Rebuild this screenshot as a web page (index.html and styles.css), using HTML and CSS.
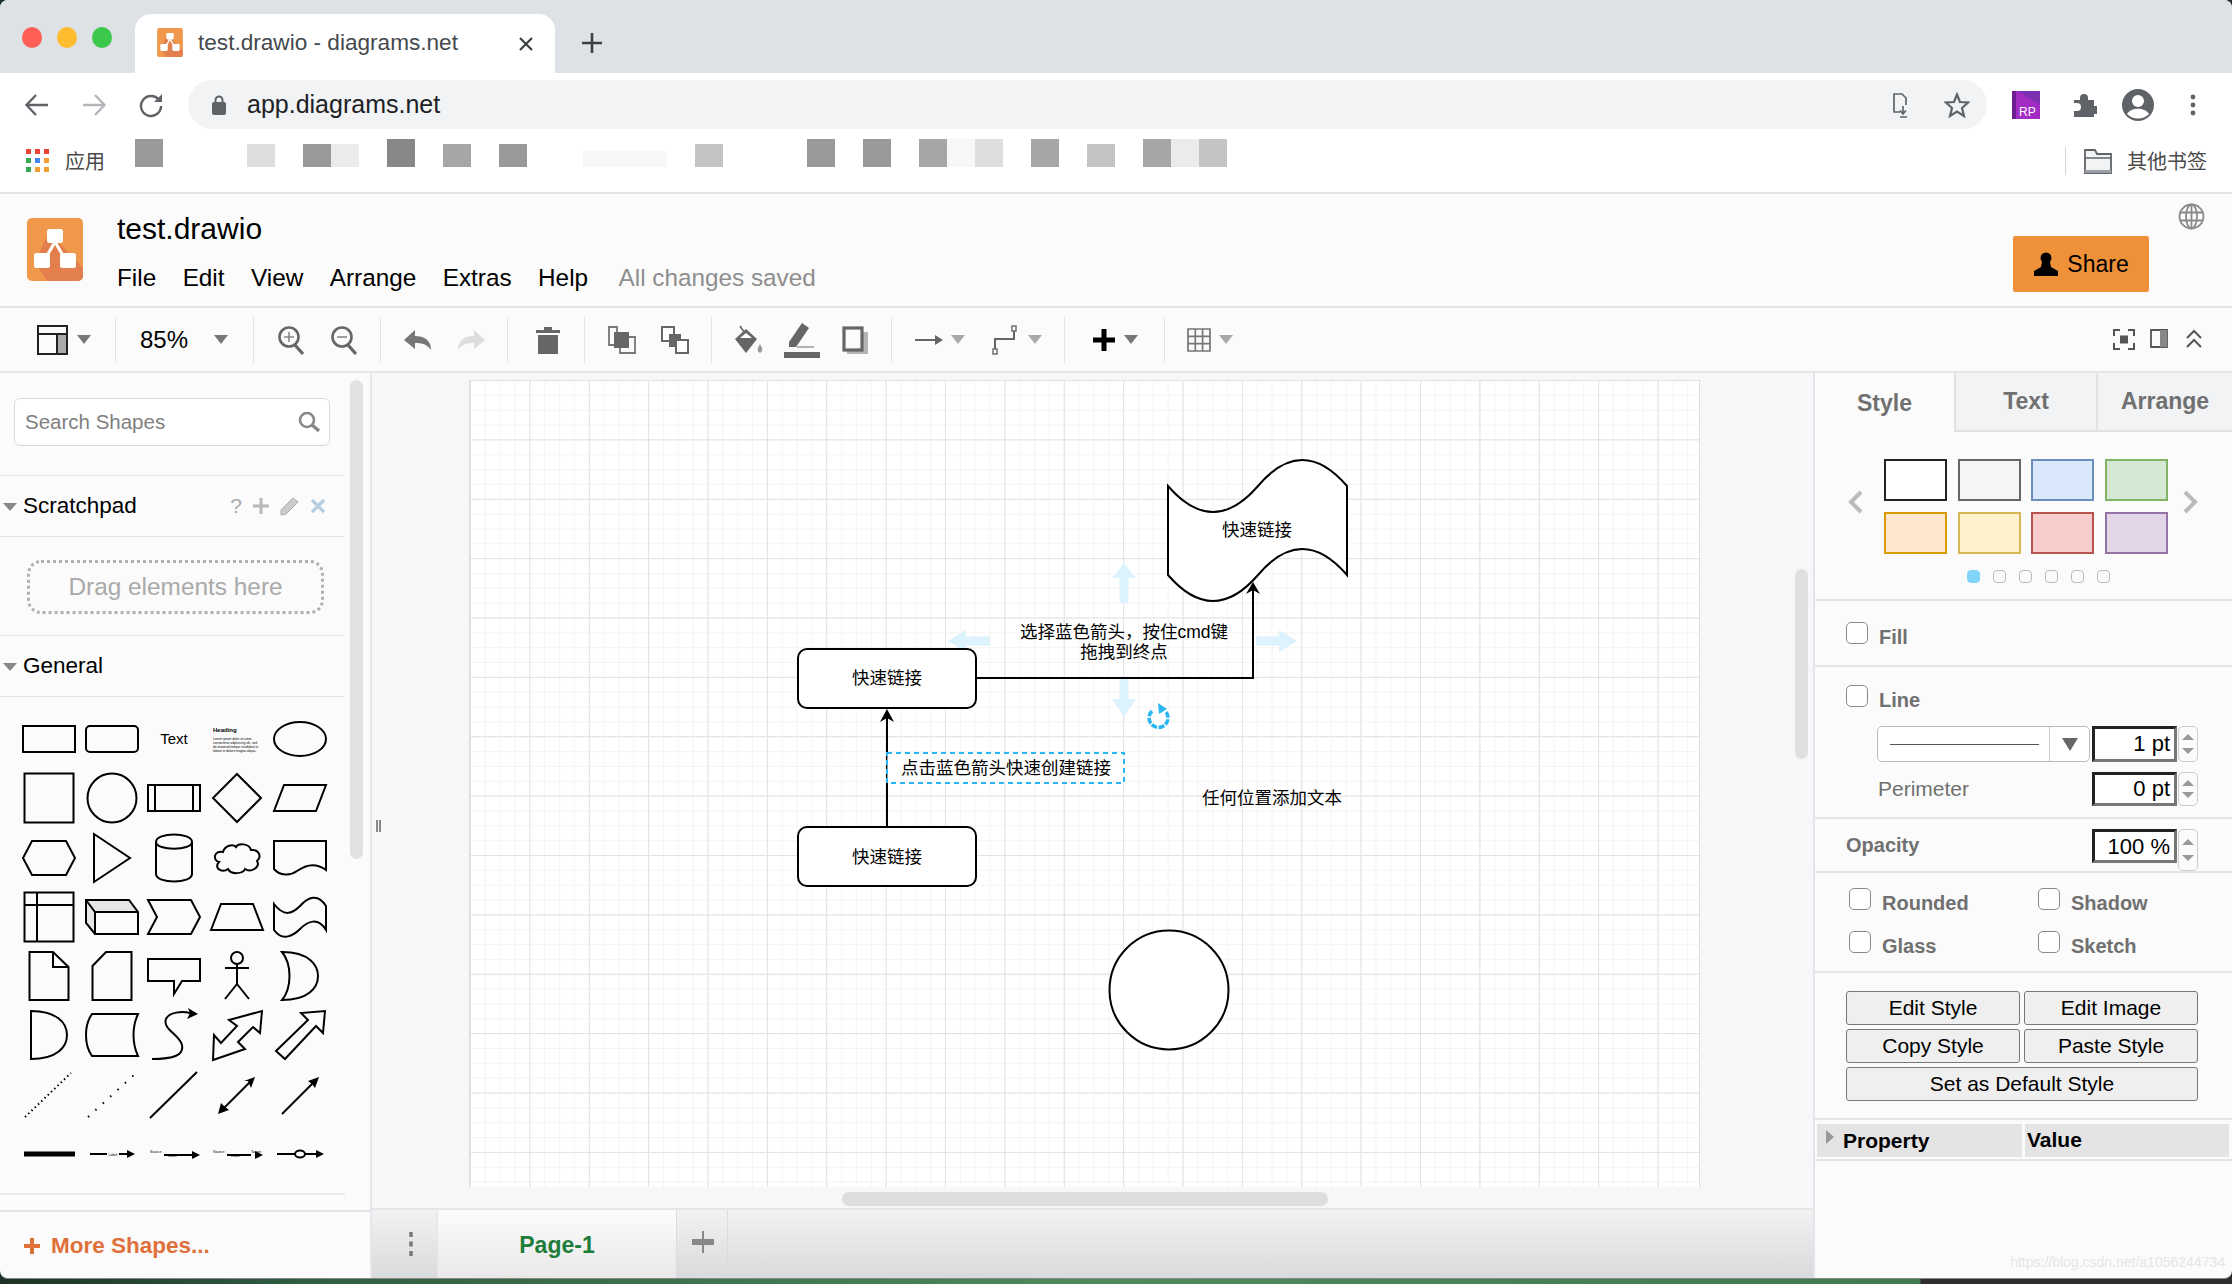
FILE: index.html
```html
<!DOCTYPE html>
<html lang="en">
<head>
  <meta charset="UTF-8" />
  <meta name="viewport" content="width=device-width, initial-scale=1.0" />
  <title>test.drawio - diagrams.net</title>
  <link rel="stylesheet" href="styles.css">
</head>
<body>

<svg class="defs" width="0" height="0">
  <symbol id="dio" viewBox="0 0 56 63">
    <rect width="56" height="63" rx="5" fill="#f0994c"/>
    <path d="M22 14 L56 50 V58 a5 5 0 0 1 -5 5 H20 L8 44 Z" fill="#e27f4c"/>
    <path d="M28 24 L15 46 M28 24 L41 46" stroke="#fff" stroke-width="3" fill="none"/>
    <rect x="20" y="11" width="16" height="14" rx="2.5" fill="#fff"/>
    <rect x="7" y="35" width="16" height="15" rx="2.5" fill="#fff"/>
    <rect x="33" y="35" width="16" height="15" rx="2.5" fill="#fff"/>
  </symbol>
</svg>

<div class="window">

  <div class="tabstrip">
    <div class="lights">
      <span class="light red"></span><span class="light yellow"></span><span class="light green"></span>
    </div>
    <div class="tab">
      <svg class="favicon" width="28" height="29"><use href="#dio"/></svg>
      <span class="tab-title">test.drawio - diagrams.net</span>
      <svg class="tab-close" width="16" height="16" viewBox="0 0 16 16"><path d="M2 2 L14 14 M14 2 L2 14" stroke="#3c4043" stroke-width="2.2"/></svg>
    </div>
    <svg class="new-tab" width="22" height="22" viewBox="0 0 22 22"><path d="M11 1 V21 M1 11 H21" stroke="#3c4043" stroke-width="2.6"/></svg>
  </div>

  <div class="urlbar">
    <svg class="nav-icon" width="26" height="24" viewBox="0 0 26 24"><path d="M24 12 H3 M12 2 L2.500 12 L12 22" fill="none" stroke="#5f6368" stroke-width="2.400"/></svg>
    <svg class="nav-icon" width="26" height="24" viewBox="0 0 26 24"><path d="M2 12 H23 M14 2 L23.500 12 L14 22" fill="none" stroke="#b4b6b9" stroke-width="2.400"/></svg>
    <svg class="nav-icon" width="26" height="26" viewBox="0 0 26 26"><path d="M21 8 A10 10 0 1 0 23 14" fill="none" stroke="#5f6368" stroke-width="2.400"/><path d="M24 2 V10 H16 Z" fill="#5f6368"/></svg>
    <div class="address">
      <svg width="14" height="20" viewBox="0 0 14 20"><path d="M3.500 8 V5 a3.500 3.500 0 0 1 7 0 V8" fill="none" stroke="#5f6368" stroke-width="2"/><rect y="7" width="14" height="13" rx="2" fill="#5f6368"/></svg>
      <span class="url">app.diagrams.net</span>
      <svg class="addr-a" width="18" height="26" viewBox="0 0 18 26"><path d="M9 20 H3 V2 H11 L15 6 V13 M12 14 V21 M9 18.500 L12 22 L15 18.500 M9 25 H16" fill="none" stroke="#5f6368" stroke-width="1.700"/></svg>
      <svg class="addr-b" width="26" height="26" viewBox="0 0 26 26"><path d="M13 2.500 L16 10 L24 10.500 L18 16 L20 24 L13 19.500 L6 24 L8 16 L2 10.500 L10 10 Z" fill="none" stroke="#5f6368" stroke-width="2.200"/></svg>
    </div>
    <svg class="ext-rp" width="28" height="28" viewBox="0 0 28 28"><rect width="28" height="28" fill="#a22bc4"/><rect width="4" height="28" fill="#6d1c92"/><path d="M6 0 H28 V14 Z" fill="#7c2fae"/><text x="7" y="25" class="rp-text">RP</text></svg>
    <svg class="ext-puzzle" width="26" height="26" viewBox="0 0 26 26"><path d="M3 8 H9 V6 a4 4 0 0 1 8 0 V8 H23 V14 H25 a4 4 0 0 1 0 8 H23 V25 H3 V19 H6 a4 4 0 0 0 0 -8 H3 Z" fill="#5f6368"/></svg>
    <svg class="ext-avatar" width="32" height="32" viewBox="0 0 32 32"><circle cx="16" cy="16" r="16" fill="#5f6368"/><circle cx="16" cy="12" r="6" fill="#fff"/><path d="M5 25 C9 18 23 18 27 25 C21 31 11 31 5 25 Z" fill="#fff"/></svg>
    <svg class="ext-menu" width="6" height="24" viewBox="0 0 6 24"><circle cx="3" cy="4" r="2.400" fill="#5f6368"/><circle cx="3" cy="12" r="2.400" fill="#5f6368"/><circle cx="3" cy="20" r="2.400" fill="#5f6368"/></svg>
  </div>

  <div class="bookmarks">
    <svg class="apps" width="23" height="23" viewBox="0 0 23 23">
      <rect width="5" height="5" fill="#ea4335"/><rect x="9" width="5" height="5" fill="#ea4335"/><rect x="18" width="5" height="5" fill="#ea4335"/>
      <rect y="9" width="5" height="5" fill="#34a853"/><rect x="9" y="9" width="5" height="5" fill="#4285f4"/><rect x="18" y="9" width="5" height="5" fill="#f29e38"/>
      <rect y="18" width="5" height="5" fill="#34a853"/><rect x="9" y="18" width="5" height="5" fill="#f29e38"/><rect x="18" y="18" width="5" height="5" fill="#f29e38"/>
    </svg>
    <span class="bm-label apps-label">应用</span>
    <div class="blurred">
      <i class="bm tall s2"></i><i class="bm"></i><i class="bm"></i><i class="bm"></i>
      <i class="bm mid s5"></i><i class="bm"></i>
      <i class="bm mid s2"></i><i class="bm mid s6"></i><i class="bm"></i>
      <i class="bm tall s1"></i><i class="bm"></i>
      <i class="bm mid s3"></i><i class="bm"></i>
      <i class="bm mid s2"></i><i class="bm"></i><i class="bm"></i>
      <i class="bm low s7"></i><i class="bm low s7"></i><i class="bm low s7"></i><i class="bm"></i>
      <i class="bm mid s4"></i><i class="bm"></i><i class="bm"></i><i class="bm"></i>
      <i class="bm tall s2"></i><i class="bm"></i>
      <i class="bm tall s2"></i><i class="bm"></i>
      <i class="bm tall s3"></i><i class="bm tall s7"></i><i class="bm tall s5"></i><i class="bm"></i>
      <i class="bm tall s3"></i><i class="bm"></i>
      <i class="bm mid s4"></i><i class="bm"></i>
      <i class="bm tall s3"></i><i class="bm tall s6"></i><i class="bm tall s4"></i>
    </div>
    <div class="other-bm">
      <svg width="28" height="28" viewBox="0 0 28 28"><path d="M1 26 V3 H11 L13 7 H27 V26 Z" fill="#f1f3f4" stroke="#5f6368" stroke-width="1.800"/><path d="M1 11 H27" stroke="#5f6368" stroke-width="1.500"/><rect x="1" y="23" width="26" height="3" fill="#9aa0a6"/></svg>
      <span class="bm-label">其他书签</span>
    </div>
  </div>

  <header class="app-header">
    <svg class="logo" width="56" height="63"><use href="#dio"/></svg>
    <div class="title-block">
      <div class="file-name">test.drawio</div>
      <nav class="menu">
        <span>File</span><span>Edit</span><span>View</span><span>Arrange</span><span>Extras</span><span>Help</span>
        <span class="saved">All changes saved</span>
      </nav>
    </div>
    <svg class="globe" width="27" height="27" viewBox="0 0 27 27"><g fill="none" stroke="#8a8a8a" stroke-width="1.800"><circle cx="13.500" cy="13.500" r="12"/><ellipse cx="13.500" cy="13.500" rx="5.500" ry="12"/><path d="M13.500 1.500 V25.500 M2 9.500 H25 M2 17.500 H25"/></g></svg>
    <div class="share">
      <svg width="26" height="26" viewBox="0 0 26 26"><circle cx="13" cy="7" r="5.500"/><path d="M9 11 H17 L18 16 L25 20 V25 H1 V20 L8 16 Z"/></svg>
      <span>Share</span>
    </div>
  </header>

  <div class="toolbar">
    <div class="tb-group first">
      <svg width="31" height="30" viewBox="0 0 31 30"><path d="M20 9 H30 V29 H20 Z" fill="#aaa"/><path d="M1 1 H30 V29 H1 Z M1 9 H30 M20 9 V29" fill="none" stroke="#222" stroke-width="2"/></svg>
      <b class="caret"></b>
    </div>
    <div class="tb-group zoom-group">
      <span class="zoom-value">85%</span>
      <b class="caret"></b>
    </div>
    <div class="tb-group">
      <span class="tb-btn"><svg width="27" height="30" viewBox="0 0 27 30"><circle cx="12" cy="12" r="9.500" fill="none" stroke="#666" stroke-width="2.600"/><path d="M18 20 L26 29" stroke="#666" stroke-width="3.200"/><path d="M12 7 V17 M7 12 H17" stroke="#888" stroke-width="1.600"/></svg></span>
      <span class="tb-btn"><svg width="27" height="30" viewBox="0 0 27 30"><circle cx="12" cy="12" r="9.500" fill="none" stroke="#666" stroke-width="2.600"/><path d="M18 20 L26 29" stroke="#666" stroke-width="3.200"/><path d="M7 12 H17" stroke="#888" stroke-width="1.600"/></svg></span>
    </div>
    <div class="tb-group">
      <span class="tb-btn"><svg width="28" height="22" viewBox="0 0 28 22"><path d="M0 11 L11 1 V7 C20 7 27 11 27 21 C23 15 18 14 11 14 V20 Z" fill="#777"/></svg></span>
      <span class="tb-btn"><svg width="28" height="22" viewBox="0 0 28 22"><path d="M28 11 L17 1 V7 C8 7 1 11 1 21 C5 15 10 14 17 14 V20 Z" fill="#ddd"/></svg></span>
    </div>
    <div class="tb-group delete-group">
      <span class="tb-btn"><svg width="26" height="28" viewBox="0 0 26 28"><path d="M1 4 H9 V1 H17 V4 H25 V7 H1 Z M3 9 H23 V28 H3 Z" fill="#666"/></svg></span>
    </div>
    <div class="tb-group">
      <span class="tb-btn"><svg width="28" height="28" viewBox="0 0 28 28"><path d="M9 7 V1 H1 V19 H6" fill="none" stroke="#777" stroke-width="1.800"/><rect x="6" y="6" width="15" height="16" fill="#666"/><path d="M21 11 H27 V27 H12 V22" fill="none" stroke="#777" stroke-width="1.800"/></svg></span>
      <span class="tb-btn"><svg width="28" height="28" viewBox="0 0 28 28"><rect x="1" y="1" width="12" height="14" fill="#fff" stroke="#666" stroke-width="2"/><rect x="8" y="8" width="12" height="13" fill="#666"/><rect x="15" y="14" width="12" height="13" fill="#fff" stroke="#666" stroke-width="2"/></svg></span>
    </div>
    <div class="tb-group">
      <span class="tb-btn"><svg width="30" height="30" viewBox="0 0 30 30"><path d="M6 1 L12 10" stroke="#666" stroke-width="1.600"/><path d="M1 14 L12 4 L23 14 L12 28 Z" fill="#666"/><path d="M12 8 L18 13 H6 Z" fill="#fff"/><path d="M26 19 C28 23 30 25 26 28 C22 25 24 23 26 19 Z" fill="#999"/></svg></span>
      <span class="tb-btn"><svg width="36" height="36" viewBox="0 0 36 36"><path d="M5 20 L18 1 L25 6 L12 25 H5 Z" fill="#666"/><path d="M13 25 H30" stroke="#999" stroke-width="1.500"/><rect y="30" width="36" height="6" fill="#666"/></svg></span>
      <span class="tb-btn"><svg width="26" height="28" viewBox="0 0 26 28"><rect x="5" y="6" width="21" height="22" fill="#b5b5b5"/><rect x="2" y="2" width="18" height="22" fill="#fbfbfb" stroke="#666" stroke-width="3.200"/></svg></span>
    </div>
    <div class="tb-group">
      <span class="tb-wide"><svg width="28" height="14" viewBox="0 0 28 14"><path d="M0 7 H22" stroke="#666" stroke-width="2"/><path d="M20 2 L28 7 L20 12 Z" fill="#666"/></svg><b class="caret light-caret"></b></span>
      <span class="tb-wide"><svg width="30" height="30" viewBox="0 0 30 30"><path d="M5 24 V14 H24 V4" fill="none" stroke="#666" stroke-width="2"/><rect x="3" y="24" width="4" height="5" fill="#fff" stroke="#666" stroke-width="1.400"/><rect x="22" y="1" width="4" height="5" fill="#fff" stroke="#666" stroke-width="1.400"/></svg><b class="caret light-caret"></b></span>
    </div>
    <div class="tb-group">
      <span class="tb-one"><svg width="24" height="24" viewBox="0 0 24 24"><path d="M12 1 V23 M1 12 H23" stroke="#000" stroke-width="5"/></svg><b class="caret"></b></span>
    </div>
    <div class="tb-group last">
      <span class="tb-one"><svg width="24" height="24" viewBox="0 0 24 24"><path d="M1 1 H23 V23 H1 Z M1 8.300 H23 M1 15.600 H23 M8.300 1 V23 M15.600 1 V23" fill="none" stroke="#777" stroke-width="1.700"/></svg><b class="caret light-caret"></b></span>
    </div>
    <div class="tb-right">
      <span class="tb-mini"><svg width="22" height="21" viewBox="0 0 22 21"><path d="M7 1 H1 V7 M15 1 H21 V7 M7 20 H1 V14 M15 20 H21 V14" fill="none" stroke="#555" stroke-width="2"/><rect x="7" y="6.500" width="8" height="8" fill="#555"/></svg></span>
      <span class="tb-mini"><svg width="18" height="19" viewBox="0 0 18 19"><path d="M1 1 H17 V18 H1 Z" fill="none" stroke="#555" stroke-width="1.800"/><rect x="10" y="1" width="7" height="17" fill="#888"/></svg></span>
      <span class="tb-mini"><svg width="18" height="20" viewBox="0 0 18 20"><path d="M2 9 L9 2 L16 9 M2 18 L9 11 L16 18" fill="none" stroke="#555" stroke-width="2"/></svg></span>
    </div>
  </div>

  <div class="workspace">

    <aside class="sidebar">
      <div class="search-wrap">
        <div class="search">
          <span>Search Shapes</span>
          <svg width="22" height="22" viewBox="0 0 22 22"><circle cx="9" cy="9" r="7" fill="none" stroke="#888" stroke-width="2.600"/><path d="M14 14 L21 20" stroke="#888" stroke-width="3.400"/></svg>
        </div>
      </div>
      <div class="sb-title">
        <b class="tri"></b><span>Scratchpad</span>
        <div class="sb-tools">
          <span class="q">?</span>
          <svg width="18" height="18" viewBox="0 0 18 18"><path d="M9 1 V17 M1 9 H17" stroke="#b8b8b8" stroke-width="3"/></svg>
          <svg width="20" height="20" viewBox="0 0 20 20"><path d="M1 14 L13 2 L18 6 L6 18 L1 19 Z" fill="#ccc" stroke="#aaa" stroke-width="1"/></svg>
          <svg width="16" height="16" viewBox="0 0 16 16"><path d="M2 2 L14 14 M14 2 L2 14" stroke="#b6cce0" stroke-width="3.200"/></svg>
        </div>
      </div>
      <div class="drop-wrap"><div class="drop">Drag elements here</div></div>
      <div class="sb-title"><b class="tri"></b><span>General</span></div>

      <div class="shapes">
        <!-- row 1 -->
        <svg viewBox="-31 -29 63 59"><rect x="-26" y="-13" width="52" height="26"/></svg>
        <svg viewBox="-31 -29 63 59"><rect x="-26" y="-13" width="52" height="26" rx="4"/></svg>
        <svg viewBox="-31 -29 63 59"><text class="sh-text" x="0" y="5" text-anchor="middle">Text</text></svg>
        <svg viewBox="-31 -29 63 59"><text class="sh-head" x="-24" y="-7">Heading</text><text class="sh-tiny" x="-24" y="1">Lorem ipsum dolor sit amet,</text><text class="sh-tiny" x="-24" y="5">consectetur adipisicing elit, sed</text><text class="sh-tiny" x="-24" y="9">do eiusmod tempor incididunt ut</text><text class="sh-tiny" x="-24" y="13">labore et dolore magna aliqua.</text></svg>
        <svg viewBox="-31 -29 63 59"><ellipse rx="26" ry="17"/></svg>
        <!-- row 2 -->
        <svg viewBox="-31 -29 63 59"><rect x="-24.500" y="-24.500" width="49" height="49"/></svg>
        <svg viewBox="-31 -29 63 59"><circle r="24.500"/></svg>
        <svg viewBox="-31 -29 63 59"><path d="M-26 -13 H26 V13 H-26 Z M-19 -13 V13 M19 -13 V13"/></svg>
        <svg viewBox="-31 -29 63 59"><path d="M0 -24 L24 0 L0 24 L-24 0 Z"/></svg>
        <svg viewBox="-31 -29 63 59"><path d="M-26 13 L-16 -13 H26 L16 13 Z"/></svg>
        <!-- row 3 -->
        <svg viewBox="-31 -29 63 59"><path d="M-26 0 L-17 -17 H17 L26 0 L17 17 H-17 Z"/></svg>
        <svg viewBox="-31 -29 63 59"><path d="M-18 -24 L18 0 L-18 24 Z"/></svg>
        <svg viewBox="-31 -29 63 59"><path d="M-18 -16 C-18 -26 18 -26 18 -16 V16 C18 26 -18 26 -18 16 Z M-18 -16 C-18 -7 18 -7 18 -16"/></svg>
        <svg viewBox="-31 -29 63 59"><path d="M-14 -6 C-24 -8 -24 3 -18 4 C-24 11 -14 15 -9 11 C-6 17 6 16 8 11 C14 15 24 9 20 3 C25 -1 22 -9 14 -8 C12 -15 1 -15 -1 -11 C-4 -14 -12 -13 -14 -6 Z"/></svg>
        <svg viewBox="-31 -29 63 59"><path d="M-26 -17 H26 V12 C14 3 4 8 -3 13 C-10 18 -20 18 -26 11 Z"/></svg>
        <!-- row 4 -->
        <svg viewBox="-31 -29 63 59"><path d="M-24.500 -24.500 H24.500 V24.500 H-24.500 Z M-12 -24.500 V24.500 M-24.500 -12 H24.500"/></svg>
        <svg viewBox="-31 -29 63 59"><path class="cube-top" d="M-26 -17 L-17 -5 H26 L17 -17 Z"/><path class="cube-side" d="M-26 -17 V6 L-17 17 V-5 Z"/><path d="M-26 -17 H17 L26 -5 V17 H-17 L-26 6 Z M-26 -17 L-17 -5 H26 M-17 -5 V17"/></svg>
        <svg viewBox="-31 -29 63 59"><path d="M-26 -17 H17 L26 0 L17 17 H-26 L-17 0 Z"/></svg>
        <svg viewBox="-31 -29 63 59"><path d="M-26 13 L-16 -13 H16 L26 13 Z"/></svg>
        <svg viewBox="-31 -29 63 59"><path d="M-26 -13 C-16 0 -8 -3 0 -11 C8 -20 18 -24 26 -11 V13 C18 0 8 4 0 12 C-8 20 -18 24 -26 13 Z"/></svg>
        <!-- row 5 -->
        <svg viewBox="-31 -29 63 59"><path d="M-19.500 -24 H4 L19.500 -9 V24 H-19.500 Z M4 -24 V-9 H19.500"/></svg>
        <svg viewBox="-31 -29 63 59"><path d="M-6 -24 H19.500 V24 H-19.500 V-10 Z"/></svg>
        <svg viewBox="-31 -29 63 59"><path d="M-26 -17 H26 V5 H8 L0 18 V5 H-26 Z"/></svg>
        <svg viewBox="-31 -29 63 59"><circle cy="-18" r="6"/><path d="M0 -12 V8 M-12 -8 H12 M0 8 L-12 23 M0 8 L12 23"/></svg>
        <svg viewBox="-31 -29 63 59"><path d="M-18 -24 C10 -24 18 -10 18 0 C18 12 8 24 -18 24 C-8 12 -8 -12 -18 -24 Z"/></svg>
        <!-- row 6 -->
        <svg viewBox="-31 -29 63 59"><path d="M-18 -24 C8 -24 18 -12 18 0 C18 12 8 24 -18 24 Z"/></svg>
        <svg viewBox="-31 -29 63 59"><path d="M-20 -21 H26 C20 -8 20 8 26 21 H-20 C-28 10 -28 -10 -20 -21 Z"/></svg>
        <svg viewBox="-31 -29 63 59"><path d="M-22 24 C0 24 10 20 8 10 C6 0 -12 -6 -8 -16 C-5 -23 8 -24 16 -22" /><path class="solid" d="M14 -27 L24 -21 L13 -16 L16 -22 Z"/></svg>
        <svg viewBox="-31 -29 63 59"><path d="M25 -24 L23 -2 L16 -8 L1 7 L8 14 L-24 25 L-23 0 L-16 8 L0 -9 L-8 -15 Z"/></svg>
        <svg viewBox="-31 -29 63 59"><path d="M25 -24 L23 -2 L16 -9 L-15 24 L-24 16 L8 -15 L1 -22 Z"/></svg>
        <!-- row 7 -->
        <svg viewBox="-31 -29 63 59"><path class="dot1" d="M-24 22 L22 -22"/></svg>
        <svg viewBox="-31 -29 63 59"><path class="dot2" d="M-24 22 L22 -20"/></svg>
        <svg viewBox="-31 -29 63 59"><path d="M-24 23 L23 -23"/></svg>
        <svg viewBox="-31 -29 63 59"><path d="M-16 16 L16 -16"/><path class="solid" d="M18 -18 L14 -7 L11 -14 L7 -14 Z"/><path class="solid" d="M-19 19 L-16 8 L-12 12 L-8 15 Z"/></svg>
        <svg viewBox="-31 -29 63 59"><path d="M-18 19 L16 -15"/><path class="solid" d="M19 -18 L15 -7 L12 -11 L8 -14 Z"/></svg>
        <!-- row 8 -->
        <svg viewBox="-31 -29 63 59"><path class="thick" d="M-25 0 H26"/></svg>
        <svg viewBox="-31 -29 63 59"><path d="M-22 0 H-5 M7 0 H18"/><text class="sh-label" x="1" y="2" text-anchor="middle">Label</text><path class="solid" d="M23 0 L15 -4 V4 Z"/></svg>
        <svg viewBox="-31 -29 63 59"><path d="M-10 1 H20"/><text class="sh-label" x="-24" y="-1">Source</text><text class="sh-label" x="-6" y="3">Label</text><path class="solid" d="M26 1 L18 -3 V5 Z"/></svg>
        <svg viewBox="-31 -29 63 59"><path d="M-10 1 H14"/><text class="sh-label" x="-24" y="-1">Source</text><text class="sh-label" x="-6" y="3">Label</text><text class="sh-label" x="14" y="-1">Target</text><path class="solid" d="M26 1 L18 -3 V5 Z"/></svg>
        <svg viewBox="-31 -29 63 59"><path d="M-23 0 H-5 M5 0 H20"/><ellipse rx="5" ry="3.500"/><path class="solid" d="M24 0 L16 -4 V4 Z"/></svg>
      </div>

      <div class="more">
        <svg width="18" height="18" viewBox="0 0 18 18"><path d="M9 1 V17 M1 9 H17" stroke="#e0703a" stroke-width="4"/></svg>
        <span>More Shapes...</span>
      </div>
      <div class="sb-scroll"></div>
    </aside>

    <main class="center">
      <div class="canvas">
        <div class="page">
          <svg class="diagram" viewBox="469 380 1231 807" width="1231" height="807">
            <!-- connection hints -->
            <g class="hint">
              <path d="M1124 563 L1136 578 H1128.500 V603 H1119.500 V578 H1112 Z"/>
              <path d="M1124 717 L1136 699 H1128.500 V678 H1119.500 V699 H1112 Z"/>
              <path d="M948 641 L966 630 V636.500 H990 V645.500 H966 V652 Z"/>
              <path d="M1297 641 L1279 630 V636.500 H1256 V645.500 H1279 V652 Z"/>
            </g>
            <!-- shapes -->
            <g class="node">
              <rect x="798" y="649" width="178" height="59" rx="9"/>
              <rect x="798" y="827" width="178" height="59" rx="9"/>
              <path d="M1168 486 Q1213 538 1258 486 Q1302 434 1347 486 V575 Q1302 523 1258 575 Q1213 627 1168 575 Z"/>
              <circle cx="1169" cy="990" r="59.500"/>
            </g>
            <!-- edges -->
            <path class="edge" d="M976 678 H1253 V590"/>
            <path class="edge" d="M887 827 V718"/>
            <path class="head" d="M1253 582 L1260 594 L1253 590 L1246 594 Z"/>
            <path class="head" d="M887 709 L894 722 L887 718 L880 722 Z"/>
            <!-- labels -->
            <rect class="selected" x="887" y="753" width="237" height="30"/>
            <text class="lbl" x="887" y="684">快速链接</text>
            <text class="lbl" x="887" y="863">快速链接</text>
            <text class="lbl" x="1257" y="536">快速链接</text>
            <text class="lbl" x="1124" y="638">选择蓝色箭头，按住cmd键</text>
            <text class="lbl" x="1124" y="658">拖拽到终点</text>
            <text class="lbl" x="1006" y="774">点击蓝色箭头快速创建链接</text>
            <text class="lbl" x="1272" y="804">任何位置添加文本</text>
            <!-- rotate handle -->
            <path class="rotate" d="M1152 711 A9.500 9.500 0 1 0 1166 712"/>
            <path class="rotate-head" d="M1158 703 L1167 709 L1159 714 Z"/>
          </svg>
        </div>
        <div class="scroll-v"></div>
        <div class="scroll-h"></div>
      </div>
      <div class="pages">
        <svg class="pages-menu" width="6" height="24" viewBox="0 0 6 24"><path d="M3 0 V5 M3 9.500 V14.500 M3 19 V24" stroke="#777" stroke-width="3.400"/></svg>
        <div class="page-tab">Page-1</div>
        <div class="page-add"><svg width="24" height="24" viewBox="0 0 24 24"><path d="M12 1 V23" stroke="#888" stroke-width="2"/><path d="M1 12 H23" stroke="#888" stroke-width="6"/></svg></div>
      </div>
      <div class="splitter"></div>
    </main>

    <aside class="panel">
      <div class="panel-tabs">
        <div class="ptab active">Style</div>
        <div class="ptab text-tab">Text</div>
        <div class="ptab">Arrange</div>
      </div>

      <section class="swatches">
        <div class="swatch-row">
          <svg class="chev" width="16" height="24" viewBox="0 0 16 24"><path d="M13 2 L3 12 L13 22" fill="none" stroke="#bbb" stroke-width="4"/></svg>
          <div class="swatch-grid">
            <span class="sw sw-white"></span><span class="sw sw-grey"></span><span class="sw sw-blue"></span><span class="sw sw-green"></span>
            <span class="sw sw-orange"></span><span class="sw sw-yellow"></span><span class="sw sw-red"></span><span class="sw sw-purple"></span>
          </div>
          <svg class="chev" width="16" height="24" viewBox="0 0 16 24"><path d="M3 2 L13 12 L3 22" fill="none" stroke="#bbb" stroke-width="4"/></svg>
        </div>
        <div class="dots"><i class="dot on"></i><i class="dot"></i><i class="dot"></i><i class="dot"></i><i class="dot"></i><i class="dot"></i></div>
      </section>

      <section class="sec-fill">
        <label class="check"><i class="box"></i><b>Fill</b></label>
      </section>

      <section class="sec-line">
        <label class="check"><i class="box"></i><b>Line</b></label>
        <div class="line-row">
          <div class="line-select"><span class="line-sample"></span><span class="select-arrow"><b></b></span></div>
          <div class="num">1 pt</div>
          <span class="spin"><b class="up"></b><b class="down"></b></span>
        </div>
        <div class="line-row perim">
          <span class="perim-label">Perimeter</span>
          <div class="num">0 pt</div>
          <span class="spin"><b class="up"></b><b class="down"></b></span>
        </div>
      </section>

      <section class="sec-opacity">
        <b class="op-label">Opacity</b>
        <div class="num">100 %</div>
        <span class="spin"><b class="up"></b><b class="down"></b></span>
      </section>

      <section class="sec-options">
        <label class="check"><i class="box"></i><b>Rounded</b></label>
        <label class="check"><i class="box"></i><b>Shadow</b></label>
        <label class="check"><i class="box"></i><b>Glass</b></label>
        <label class="check"><i class="box"></i><b>Sketch</b></label>
      </section>

      <section class="sec-buttons">
        <button>Edit Style</button><button>Edit Image</button>
        <button>Copy Style</button><button>Paste Style</button>
        <button class="wide">Set as Default Style</button>
      </section>

      <section class="sec-props">
        <div class="prop-cell"><b class="prop-tri"></b>Property</div>
        <div class="prop-cell value">Value</div>
      </section>

      <div class="watermark">https://blog.csdn.net/a1056244734</div>
    </aside>

  </div>
</div>

</body>
</html>
```

FILE: styles.css
```css
* {
  box-sizing: border-box;
}

html, body {
  margin: 0;
  width: 2232px;
  height: 1284px;
  overflow: hidden;
}

body {
  font-family: "Liberation Sans", "Noto Sans CJK SC", sans-serif;
  color: #000;
  background: linear-gradient(90deg, #1c3226 0, #2f5d40 300px, #4e8a5c 1100px, #3f7a50 1920px, #2e2e2e 1921px);
}

.defs {
  position: absolute;
}

.window {
  width: 2232px;
  height: 1279px;
  display: flex;
  flex-direction: column;
  border-radius: 8px;
  overflow: hidden;
  background: #fbfbfb;
  border-bottom: 1px solid #888;
}

/* browser chrome */
.tabstrip {
  height: 73px;
  flex: none;
  background: #dee1e6;
  display: flex;
  align-items: flex-end;
}

.lights {
  width: 135px;
  height: 73px;
  padding: 27px 0 0 22px;
  display: flex;
  gap: 15px;
}

.light {
  width: 20px;
  height: 21px;
  border-radius: 50%;
}

.red { background: #ff5f57; }
.yellow { background: #febc2e; }
.green { background: #3cc84a; }

.tab {
  position: relative;
  width: 420px;
  height: 59px;
  background: #fff;
  border-radius: 16px 16px 0 0;
  display: flex;
  align-items: center;
  padding: 0 0 2px 21px;
}

.favicon {
  flex: none;
}

.tab-title {
  margin-left: 14px;
  font-size: 22.600px;
  color: #45494d;
  white-space: nowrap;
}

.tab-close {
  position: absolute;
  left: 383px;
  top: 22px;
}

.new-tab {
  margin: 0 0 19px 26px;
}

.urlbar {
  height: 56px;
  flex: none;
  background: #fff;
  display: flex;
  align-items: center;
  padding: 7px 0 0 24px;
}

.nav-icon {
  margin-right: 31px;
  flex: none;
}

.address {
  position: relative;
  width: 1799px;
  height: 49px;
  margin-left: -7px;
  border-radius: 25px;
  background: #f1f3f4;
  display: flex;
  align-items: center;
  padding-left: 24px;
}

.url {
  margin-left: 21px;
  font-size: 25px;
  color: #202124;
}

.addr-a {
  position: absolute;
  left: 1703px;
  top: 12px;
}

.addr-b {
  position: absolute;
  left: 1756px;
  top: 12px;
}

.ext-rp { margin-left: 25px; flex: none; }
.ext-puzzle { margin-left: 31px; flex: none; }
.ext-avatar { margin-left: 25px; flex: none; }
.ext-menu { margin-left: 36px; flex: none; }

.rp-text {
  font-size: 12px;
  fill: #fff;
}

.bookmarks {
  height: 65px;
  flex: none;
  background: #fff;
  border-bottom: 2px solid #e2e2e8;
  display: flex;
  align-items: center;
  padding: 0 0 0 26px;
  position: relative;
}

.bm-label {
  font-size: 20px;
  color: #4a4a4a;
}

.apps {
  flex: none;
}

.apps-label {
  margin-left: 16px;
}

.blurred {
  height: 28px;
  margin: -15px 0 0 30px;
  display: flex;
  align-items: flex-end;
}

.bm {
  width: 28px;
  flex: none;
}

.tall { height: 28px; }
.mid { height: 23px; }
.low { height: 16px; }

.s1 { background: #888; }
.s2 { background: #999; }
.s3 { background: #a6a6a6; }
.s4 { background: #c4c4c4; }
.s5 { background: #dedede; }
.s6 { background: #ebebeb; }
.s7 { background: #f7f7f7; }

.other-bm {
  margin-left: auto;
  width: 167px;
  height: 28px;
  border-left: 1px solid #d5d5d5;
  display: flex;
  align-items: center;
  gap: 15px;
  padding-left: 18px;
}

.other-bm svg {
  flex: none;
}

/* drawio header */
.app-header {
  height: 114px;
  flex: none;
  position: relative;
  border-bottom: 2px solid #e2e2e8;
  display: flex;
}

.logo {
  margin: 24px 0 0 27px;
  flex: none;
}

.title-block {
  margin-left: 34px;
}

.file-name {
  margin-top: 16px;
  font-size: 30px;
  line-height: 38px;
}

.menu {
  margin-top: 14px;
  display: flex;
  font-size: 24.300px;
  line-height: 32px;
}

.menu span {
  margin-right: 26.500px;
}

.menu .saved {
  margin: 0 0 0 4px;
  color: #8e8e8e;
}

.globe {
  position: absolute;
  left: 2178px;
  top: 9px;
}

.share {
  position: absolute;
  left: 2013px;
  top: 42px;
  width: 136px;
  height: 56px;
  background: #ef9139;
  border-radius: 2px;
  display: flex;
  align-items: center;
  justify-content: center;
  gap: 8px;
  font-size: 23px;
}

/* drawio toolbar */
.toolbar {
  height: 65px;
  flex: none;
  border-bottom: 2px solid #e6e6ea;
  display: flex;
  align-items: center;
}

.tb-group {
  height: 46px;
  padding: 0 10px;
  border-right: 1px solid #e2e2e2;
  display: flex;
  align-items: center;
  flex: none;
}

.tb-group.first {
  width: 116px;
  padding: 0 0 0 37px;
  gap: 9px;
}

.tb-group.zoom-group {
  width: 138px;
  padding: 0 0 0 24px;
}

.zoom-group .caret {
  margin-left: 25px;
}

.zoom-value {
  font-size: 24px;
  width: 49px;
}

.tb-group.delete-group {
  padding-left: 13px;
}

.tb-group.last {
  border-right: none;
  margin-left: -5px;
}

.tb-btn {
  width: 53px;
  display: flex;
  align-items: center;
  justify-content: center;
}

.tb-wide {
  width: 76px;
  display: flex;
  align-items: center;
  justify-content: center;
  gap: 8px;
}

.tb-one {
  width: 79px;
  display: flex;
  align-items: center;
  justify-content: center;
  gap: 8px;
}

.caret {
  width: 0;
  height: 0;
  border-left: 7.500px solid transparent;
  border-right: 7.500px solid transparent;
  border-top: 9px solid #777;
}

.light-caret {
  border-top-color: #aaa;
}

.tb-right {
  margin-left: auto;
  padding-right: 21px;
  display: flex;
}

.tb-mini {
  width: 35px;
  display: flex;
  justify-content: center;
}

/* main area */
.workspace {
  flex: 1;
  min-height: 0;
  display: flex;
}

.sidebar {
  position: relative;
  width: 372px;
  flex: none;
  border-right: 2px solid #e7e7eb;
  display: flex;
  flex-direction: column;
}

.search-wrap {
  height: 103px;
  width: 345px;
  padding: 25px 0 0 14px;
  border-bottom: 1px solid #e5e5e5;
}

.search {
  width: 316px;
  height: 48px;
  background: #fff;
  border: 1.500px solid #d8d8d8;
  border-radius: 6px;
  display: flex;
  align-items: center;
  justify-content: space-between;
  padding: 0 9px 0 10px;
  font-size: 20.500px;
  color: #808080;
}

.sb-title {
  width: 345px;
  height: 61px;
  border-bottom: 1px solid #e5e5e5;
  display: flex;
  align-items: center;
  font-size: 22.500px;
  padding-left: 3px;
}

.tri {
  width: 0;
  height: 0;
  margin: 2px 6px 0 0;
  border-left: 7px solid transparent;
  border-right: 7px solid transparent;
  border-top: 8px solid #888;
}

.sb-tools {
  margin-left: auto;
  padding-right: 19px;
  display: flex;
  align-items: center;
  gap: 10px;
}

.q {
  font-size: 21px;
  color: #aaa;
}

.drop-wrap {
  width: 345px;
  height: 99px;
  padding: 23px 0 0 27px;
  border-bottom: 1px solid #e5e5e5;
}

.drop {
  width: 297px;
  height: 54px;
  border: 3px dotted #b0b0b0;
  border-radius: 14px;
  font-size: 24.400px;
  line-height: 47px;
  text-align: center;
  color: #a9a9a9;
}

.shapes {
  width: 345px;
  height: 498px;
  padding: 13px 0 0 18px;
  border-bottom: 2px solid #ebebeb;
  display: grid;
  grid-template-columns: repeat(5, 62.700px);
  grid-auto-rows: 59.300px;
}

.shapes svg {
  width: 63px;
  height: 59px;
  fill: none;
  stroke: #000;
  stroke-width: 2;
}

.shapes text {
  stroke: none;
  fill: #000;
}

.sh-text { font-size: 15px; }
.sh-head { font-size: 6px; font-weight: bold; }
.sh-tiny { font-size: 3.200px; }
.sh-label { font-size: 3.600px; fill: #555; }

.shapes .solid { fill: #000; stroke: none; }
.shapes .thick { stroke-width: 5; }
.shapes .dot1 { stroke-dasharray: 1.500 3; stroke-width: 2; }
.shapes .dot2 { stroke-dasharray: 1.500 8.500; stroke-width: 2; }
.shapes .cube-top, .shapes .cube-side { fill: #e6e6e6; stroke: none; }

.more {
  margin-top: 15px;
  padding: 21px 0 0 23px;
  border-top: 2px solid #e3e3ea;
  display: flex;
  align-items: center;
  gap: 10px;
  font-size: 22.500px;
  font-weight: bold;
  color: #e0703a;
}

.sb-scroll {
  position: absolute;
  left: 350px;
  top: 7px;
  width: 13px;
  height: 479px;
  border-radius: 7px;
  background: #e1e1e1;
}

.center {
  position: relative;
  flex: 1;
  min-width: 0;
  display: flex;
  flex-direction: column;
}

.canvas {
  position: relative;
  height: 837px;
  flex: none;
  background: #f6f7f9;
  border-bottom: 2px solid #e6e6e6;
  padding: 7px 0 0 97px;
}

.page {
  position: relative;
  width: 1231px;
  height: 807px;
  background-color: #fff;
  background-image:
    linear-gradient(#e2e2e2 1.200px, transparent 1.200px),
    linear-gradient(90deg, #e2e2e2 1.200px, transparent 1.200px),
    linear-gradient(#f4f4f4 1px, transparent 1px),
    linear-gradient(90deg, #f4f4f4 1px, transparent 1px);
  background-size: 59.380px 59.380px, 59.380px 59.380px, 14.845px 14.845px, 14.845px 14.845px;
  border-left: 1px solid #dcdcdc;
  border-right: 1px solid #dcdcdc;
}

.diagram {
  position: absolute;
  left: -1px;
  top: 0;
}

.hint path {
  fill: #dcf2fc;
}

.node rect, .node path, .node circle {
  fill: #fff;
  stroke: #000;
  stroke-width: 2;
}

.edge {
  fill: none;
  stroke: #000;
  stroke-width: 2;
}

.head {
  fill: #000;
}

.selected {
  fill: #fff;
  fill-opacity: 0.6;
  stroke: #29b6f2;
  stroke-width: 2;
  stroke-dasharray: 5 4;
}

.lbl {
  font-size: 17.500px;
  text-anchor: middle;
  fill: #000;
}

.rotate {
  fill: none;
  stroke: #29b6f2;
  stroke-width: 3.500;
  stroke-dasharray: 6 1.500;
}

.rotate-head {
  fill: #29b6f2;
}

.scroll-v {
  position: absolute;
  left: 1423px;
  top: 196px;
  width: 13px;
  height: 190px;
  border-radius: 7px;
  background: #dfe0e2;
}

.scroll-h {
  position: absolute;
  left: 470px;
  top: 819px;
  width: 486px;
  height: 14px;
  border-radius: 7px;
  background: #dddee0;
}

.pages {
  flex: 1;
  display: flex;
  align-items: stretch;
  background: linear-gradient(#f1f2f3, #d8d9db);
}

.pages-menu {
  margin: 22px 0 0 36px;
  flex: none;
}

.page-tab {
  margin-left: 23px;
  width: 240px;
  background: linear-gradient(#fcfcfc, #e8e8e9);
  border-right: 1px solid #dcdcdc;
  border-left: 1px solid #e4e4e4;
  font-size: 23px;
  font-weight: bold;
  color: #1e7d38;
  text-align: center;
  line-height: 70px;
}

.page-add {
  width: 51px;
  border-right: 1px solid #dcdcdc;
  padding: 20px 0 0 14px;
}

.splitter {
  position: absolute;
  left: 4px;
  top: 447px;
  width: 5px;
  height: 12px;
  border-left: 2px solid #888;
  border-right: 2px solid #888;
}

/* format panel */
.panel {
  position: relative;
  width: 419px;
  flex: none;
  border-left: 2px solid #e5e5e9;
}

.panel-tabs {
  height: 59px;
  display: flex;
}

.ptab {
  width: 136px;
  background: #f1f3f4;
  border-bottom: 2px solid #e2e2e5;
  border-left: 2px solid #e2e2e5;
  font-size: 23px;
  font-weight: bold;
  color: #707070;
  text-align: center;
  line-height: 56px;
}

.ptab.text-tab {
  width: 142px;
}

.ptab.active {
  width: 139px;
  background: #fbfbfb;
  border: none;
  line-height: 60px;
}

.panel section {
  border-bottom: 2px solid #e5e5e9;
}

.swatches {
  height: 169px;
  padding-top: 27px;
}

.swatch-row {
  display: flex;
  align-items: center;
  padding-left: 33px;
}

.chev {
  margin-top: -9px;
}

.swatch-grid {
  margin: 0 14px 0 20px;
  display: grid;
  grid-template-columns: repeat(4, 63px);
  grid-auto-rows: 42px;
  gap: 11px 10.500px;
}

.sw {
  border: 2px solid;
}

.sw-white { background: #fff; border-color: #222; }
.sw-grey { background: #f5f5f5; border-color: #666; }
.sw-blue { background: #dae8fc; border-color: #6c8ebf; }
.sw-green { background: #d5e8d4; border-color: #82b366; }
.sw-orange { background: #ffe6cc; border-color: #d79b00; }
.sw-yellow { background: #fff2cc; border-color: #d6b656; }
.sw-red { background: #f8cecc; border-color: #b85450; }
.sw-purple { background: #e1d5e7; border-color: #9673a6; }

.dots {
  margin: 16px 0 0 152px;
  display: flex;
  gap: 13px;
}

.dot {
  width: 13px;
  height: 13px;
  border: 1.500px solid #bbb;
  border-radius: 4px;
}

.dot.on {
  background: #82d4fb;
  border-color: #82d4fb;
}

.check {
  display: flex;
  font-size: 20px;
  color: #707070;
}

.box {
  width: 22px;
  height: 22px;
  flex: none;
  background: #fff;
  border: 1.500px solid #8a8a8a;
  border-radius: 5px;
  margin-right: 11px;
}

.check b {
  padding-top: 4px;
}

.sec-fill {
  height: 66px;
  padding: 21px 0 0 31px;
}

.sec-line {
  height: 152px;
  padding: 18px 0 0 31px;
}

.line-row {
  margin: 14px 0 0 31px;
  display: flex;
  align-items: stretch;
  height: 36px;
}

.line-row.perim {
  margin-top: 10px;
  height: 34px;
}

.line-select {
  width: 213px;
  margin-right: 2px;
  background: #fff;
  border: 1.500px solid #bbb;
  border-radius: 5px;
  display: flex;
  align-items: center;
}

.line-sample {
  width: 149px;
  margin-left: 12px;
  border-top: 1.500px solid #555;
}

.select-arrow {
  margin-left: 10px;
  width: 40px;
  height: 100%;
  border-left: 1.500px solid #ccc;
  display: flex;
  align-items: center;
  justify-content: center;
}

.select-arrow b {
  width: 0;
  height: 0;
  border-left: 8px solid transparent;
  border-right: 8px solid transparent;
  border-top: 13px solid #666;
}

.num {
  width: 85px;
  background: #fff;
  border: 3px solid;
  border-color: #222 #777 #777 #222;
  font-size: 22px;
  line-height: 30px;
  text-align: right;
  padding-right: 4px;
  flex: none;
}

.perim .num {
  line-height: 28px;
}

.spin {
  width: 20px;
  margin-left: 1px;
  border: 1.500px solid #ccc;
  border-radius: 5px;
  display: flex;
  flex-direction: column;
  align-items: center;
  justify-content: space-evenly;
  flex: none;
}

.spin b {
  width: 0;
  height: 0;
  border-left: 6px solid transparent;
  border-right: 6px solid transparent;
}

.spin .up { border-bottom: 6px solid #999; }
.spin .down { border-top: 6px solid #999; }

.perim-label {
  width: 215px;
  font-size: 21px;
  color: #707070;
  line-height: 34px;
  padding-left: 1px;
}

.sec-opacity {
  height: 54px;
  padding: 10px 0 0 31px;
  display: flex;
}

.sec-opacity .num {
  height: 34px;
  line-height: 29px;
}

.op-label {
  width: 246px;
  font-size: 20px;
  color: #707070;
  line-height: 32px;
}

.sec-options {
  height: 100px;
  padding: 15px 0 0 34px;
  display: grid;
  grid-template-columns: 189px 189px;
  grid-auto-rows: 43px;
}

.sec-buttons {
  height: 147px;
  padding: 18px 0 0 31px;
  display: grid;
  grid-template-columns: 174px 174px;
  grid-auto-rows: 34px;
  gap: 4px;
}

.sec-buttons button {
  font: 21px "Liberation Sans", sans-serif;
  color: #000;
  background: #efefef;
  border: 1.500px solid #777;
  border-radius: 3px;
  padding: 0;
}

.sec-buttons .wide {
  grid-column: 1 / 3;
}

.sec-props {
  height: 41px;
  padding: 4px 1px 2px 2px;
  display: flex;
  gap: 3px;
}

.prop-cell {
  width: 205px;
  background: #e4e4e4;
  font-size: 21px;
  font-weight: bold;
  line-height: 34px;
  padding-left: 26px;
  position: relative;
}

.prop-cell.value {
  padding-left: 2px;
  width: 204px;
  line-height: 32px;
}

.prop-tri {
  position: absolute;
  left: 9px;
  top: 6px;
  width: 0;
  height: 0;
  border-top: 7px solid transparent;
  border-bottom: 7px solid transparent;
  border-left: 8px solid #999;
}

.watermark {
  position: absolute;
  right: 7px;
  bottom: 8px;
  font-size: 14px;
  color: #e6e6e6;
}
```
